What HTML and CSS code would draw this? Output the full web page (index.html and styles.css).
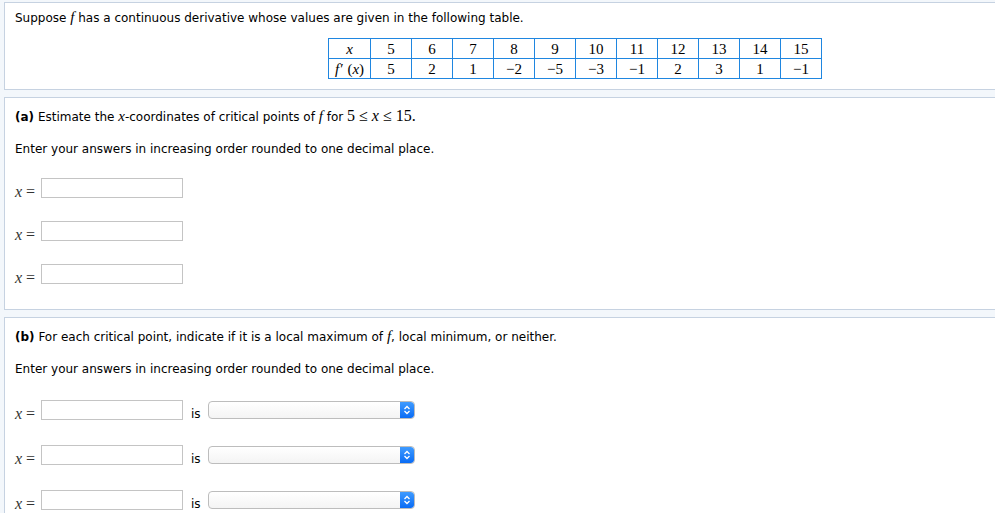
FILE: index.html
```html
<!DOCTYPE html>
<html>
<head>
<meta charset="utf-8">
<link rel="stylesheet" href="styles.css">
</head>
<body>
<div class="page">
  <section class="panel p1">
    <p class="txt">Suppose <span class="m i">f</span> has a continuous derivative whose values are given in the following table.</p>
    <table class="tbl">
      <tr><td class="h"><span class="i">x</span></td><td>5</td><td>6</td><td>7</td><td>8</td><td>9</td><td>10</td><td>11</td><td>12</td><td>13</td><td>14</td><td>15</td></tr>
      <tr><td class="h"><span class="i">f</span>&#8202;&#8242; (<span class="i">x</span>)</td><td>5</td><td>2</td><td>1</td><td>&minus;2</td><td>&minus;5</td><td>&minus;3</td><td>&minus;1</td><td>2</td><td>3</td><td>1</td><td>&minus;1</td></tr>
    </table>
  </section>
  <section class="panel p2">
    <p class="txt"><b>(a)</b> Estimate the <span class="m i">x</span>-coordinates of critical points of <span class="m i">f</span> for <span class="m big">5 &le; <span class="i">x</span> &le; 15.</span></p>
    <p class="txt t2">Enter your answers in increasing order rounded to one decimal place.</p>
    <div class="rows ra">
      <div class="row"><span class="lab"><span class="i">x</span> =</span><span class="inp"></span></div>
      <div class="row"><span class="lab"><span class="i">x</span> =</span><span class="inp"></span></div>
      <div class="row"><span class="lab"><span class="i">x</span> =</span><span class="inp"></span></div>
    </div>
  </section>
  <section class="panel p3">
    <p class="txt"><b>(b)</b> For each critical point, indicate if it is a local maximum of <span class="m i">f</span>, local minimum, or neither.</p>
    <p class="txt t2">Enter your answers in increasing order rounded to one decimal place.</p>
    <div class="rows rb">
      <div class="row"><span class="lab"><span class="i">x</span> =</span><span class="inp"></span><span class="is">is</span><span class="sel"><span class="btn"><svg width="8" height="10" viewBox="0 0 8 10"><path d="M1.5 4 L4 1.5 L6.5 4 M1.5 6 L4 8.5 L6.5 6" fill="none" stroke="#fff" stroke-width="1.3"/></svg></span></span></div>
      <div class="row"><span class="lab"><span class="i">x</span> =</span><span class="inp"></span><span class="is">is</span><span class="sel"><span class="btn"><svg width="8" height="10" viewBox="0 0 8 10"><path d="M1.5 4 L4 1.5 L6.5 4 M1.5 6 L4 8.5 L6.5 6" fill="none" stroke="#fff" stroke-width="1.3"/></svg></span></span></div>
      <div class="row"><span class="lab"><span class="i">x</span> =</span><span class="inp"></span><span class="is">is</span><span class="sel"><span class="btn"><svg width="8" height="10" viewBox="0 0 8 10"><path d="M1.5 4 L4 1.5 L6.5 4 M1.5 6 L4 8.5 L6.5 6" fill="none" stroke="#fff" stroke-width="1.3"/></svg></span></span></div>
    </div>
  </section>
</div>
</body>
</html>
```

FILE: styles.css
```css
html, body {
  margin: 0;
  padding: 0;
  background: #f3f7fb;
  overflow: hidden;
  width: 995px;
  height: 513px;
}
.page {
  padding: 2px 0 0 4px;
  display: flex;
  flex-direction: column;
  gap: 7px;
  font-family: "DejaVu Sans", Verdana, sans-serif;
  font-size: 12px;
  color: #000;
}
.panel {
  width: 1000px;
  background: #fff;
  border: 1px solid #c6d2e1;
  box-sizing: border-box;
  padding: 0 0 0 10px;
}
.p1 { height: 88px; padding-top: 6px; }
.p2 { height: 213px; padding-top: 10px; }
.p3 { height: 220px; padding-top: 10px; }
.txt {
  margin: 0;
  line-height: 16px;
  white-space: nowrap;
}
.t2 { margin-top: 16px; }
.m { font-family: "Liberation Serif", "Times New Roman", serif; font-size: 15px; }
.big { font-size: 16px; }
.i { font-style: italic; font-family: "Liberation Serif", "Times New Roman", serif; }
.tbl {
  border-collapse: collapse;
  margin: 12px 0 0 313px;
  font-family: "Liberation Serif", "Times New Roman", serif;
  font-size: 15px;
}
.tbl td {
  border: 1.5px solid #1f86e0;
  width: 40px;
  height: 19px;
  padding: 0;
  text-align: center;
  line-height: 18px;
}
.tbl td.h { width: 41px; }
.rows {
  display: flex;
  flex-direction: column;
}
.ra { margin-top: 21px; gap: 23px; }
.rb { margin-top: 23px; gap: 25px; }
.row {
  display: flex;
  align-items: center;
  height: 20px;
}
.lab {
  font-family: "Liberation Serif", "Times New Roman", serif;
  font-size: 16px;
  color: #333;
  width: 26px;
  position: relative;
  top: 4px;
}
.inp {
  width: 142px;
  height: 20px;
  box-sizing: border-box;
  border: 1px solid #c4c4c4;
  background: #fff;
}
.is {
  margin-left: 8px;
  width: 17px;
  position: relative;
  top: 4px;
}
.sel {
  width: 207px;
  height: 18px;
  box-sizing: border-box;
  border: 1px solid #bdbdbd;
  border-radius: 4px;
  background: linear-gradient(#fff, #f4f4f4);
  display: flex;
  justify-content: flex-end;
  overflow: hidden;
}
.btn {
  width: 14px;
  height: 16px;
  background: linear-gradient(#3f9bff, #0a6cf5);
  display: flex;
  align-items: center;
  justify-content: center;
  border-radius: 0 3px 3px 0;
}
```
